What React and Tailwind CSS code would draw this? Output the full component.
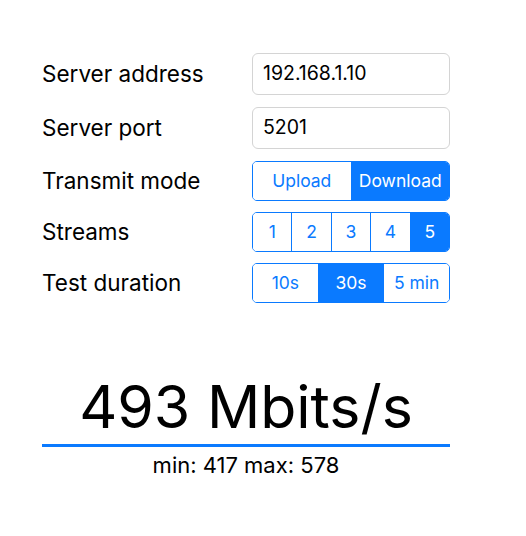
import React from 'react';

const font = { fontFamily: 'Inter, "Noto Sans", "Liberation Sans", sans-serif' };

function Segmented({ options, active }) {
  return (
    <div className="flex w-[198px] h-[40px] rounded-[5px] border border-[#0a7aff] overflow-hidden">
      {options.map((opt, i) => (
        <div
          key={opt}
          className={
            'flex-1 flex items-center justify-center text-[17.5px] ' +
            (i > 0 ? 'border-l border-[#0a7aff] ' : '') +
            (i === active ? 'bg-[#0a7aff] text-white' : 'bg-white text-[#0a7aff]')
          }
        >
          {opt}
        </div>
      ))}
    </div>
  );
}

function Row({ label, children, className = '' }) {
  return (
    <div className={'flex items-center justify-between ' + className}>
      <span className="text-[22.5px] text-black">{label}</span>
      {children}
    </div>
  );
}

export default function App() {
  return (
    <div className="w-[526px] h-[536px] bg-white pt-[53px] pl-[42px]" style={font}>
      <div className="w-[408px]">
        <div className="flex flex-col">
          <Row label="Server address">
            <div className="w-[198px] h-[42px] rounded-[6px] border border-[#d4d4d4] flex items-center pl-[10px] text-[19.5px] text-black">
              192.168.1.10
            </div>
          </Row>
          <Row label="Server port" className="mt-[12px]">
            <div className="w-[198px] h-[42px] rounded-[6px] border border-[#d4d4d4] flex items-center pl-[10px] text-[19.5px] text-black">
              5201
            </div>
          </Row>
          <Row label="Transmit mode" className="mt-[12px]">
            <Segmented options={['Upload', 'Download']} active={1} />
          </Row>
          <Row label="Streams" className="mt-[11px]">
            <Segmented options={['1', '2', '3', '4', '5']} active={4} />
          </Row>
          <Row label="Test duration" className="mt-[11px]">
            <Segmented options={['10s', '30s', '5 min']} active={1} />
          </Row>
        </div>

        <div className="mt-[74px] text-center text-[59px] leading-none text-black">493 Mbits/s</div>
        <div className="mt-[8px] h-[3px] bg-[#0a7aff]" />
        <div className="mt-[5px] text-center text-[22px] leading-tight text-black">min: 417 max: 578</div>
      </div>
    </div>
  );
}
